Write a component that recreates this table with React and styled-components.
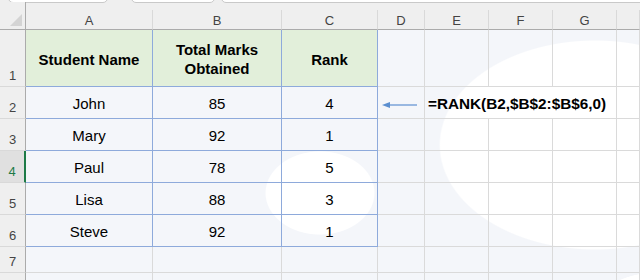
import React from 'react'
import styled, { createGlobalStyle } from 'styled-components'

const GlobalStyle = createGlobalStyle`
  html, body {
    margin: 0;
    padding: 0;
    background: #efefef;
    font-family: "Liberation Sans", Arial, sans-serif;
    overflow: hidden;
  }
`

const Page = styled.div`
  width: 640px;
  height: 280px;
  overflow: hidden;
  background: #efefef;
`

const TopStrip = styled.div`
  height: 10px;
  overflow: hidden;
  display: flex;
  padding-left: 8px;
`

const Tab = styled.div`
  width: ${({ $w }) => $w}px;
  margin-left: ${({ $ml }) => $ml || 0}px;
  height: 13px;
  margin-top: -10px;
  flex-shrink: 0;
  background: #ffffff;
  border: 1px solid #c9c9c9;
  border-radius: 5px;
  box-sizing: border-box;
`

const Sheet = styled.div`
  display: grid;
  grid-template-columns: 26px 127px 129px 96px 47px 64px 64px 64px 1fr;
  grid-template-rows: 20px 57px repeat(5, 32px) 26px 26px;
  background-color: #f4f6fa;
  background-image:
    radial-gradient(ellipse 156px 105px at 595px 135px, #ffffff 99%, transparent 100%),
    radial-gradient(ellipse 55px 42px at 320px 183px, #ffffff 98%, transparent 100%),
    radial-gradient(ellipse 60px 30px at 660px 292px, #ffffff 98%, transparent 100%);
  background-repeat: no-repeat;
`

const Corner = styled.div`
  background: #efefef;
  border-right: 1px solid #ababab;
  border-bottom: 1px solid #ababab;
  display: flex;
  align-items: flex-end;
  justify-content: flex-end;
  padding: 0 3px 3px 0;
  margin-top: -8px;
  height: 28px;
  box-sizing: border-box;
  align-self: end;
`

const ColHead = styled.div`
  background: #efefef;
  border-right: 1px solid #d9d9d9;
  border-bottom: 1px solid #ababab;
  display: flex;
  align-items: center;
  justify-content: center;
  font-size: 13px;
  color: #444444;
  padding-top: 1px;
`

const RowHead = styled.div`
  background: ${({ $active }) => ($active ? '#e0e0e0' : '#efefef')};
  border-right: ${({ $active }) => ($active ? '2px solid #1d7a47' : '1px solid #ababab')};
  border-bottom: 1px solid #d9d9d9;
  display: flex;
  align-items: flex-end;
  justify-content: center;
  padding-bottom: 3px;
  box-sizing: border-box;
  font-size: 13px;
  color: ${({ $active }) => ($active ? '#1d7a47' : '#444444')};
`

const Cell = styled.div`
  grid-column: span ${({ $span }) => $span || 1};
  box-sizing: border-box;
  border-right: 1px solid ${({ $blue }) => ($blue ? '#8eaadb' : '#dadada')};
  border-bottom: 1px solid ${({ $blue }) => ($blue ? '#8eaadb' : '#dadada')};
  background: ${({ $head }) => ($head ? '#e2efda' : 'transparent')};
  display: flex;
  align-items: center;
  justify-content: ${({ $left }) => ($left ? 'flex-start' : 'center')};
  padding: ${({ $left }) => ($left ? '2px 0 0 3px' : '2px 0 0 0')};
  text-align: center;
  font-size: ${({ $left }) => ($left ? '15.3px' : '15px')};
  line-height: 19px;
  font-weight: ${({ $bold }) => ($bold ? 700 : 400)};
  color: #000000;
  white-space: nowrap;
`

const ArrowCell = styled(Cell)`
  padding: 5px 0 0 4px;
  justify-content: flex-start;
`

const Arrow = () => (
  <svg width="36" height="8" viewBox="0 0 36 8">
    <line x1="4" y1="4" x2="35" y2="4" stroke="#5b8fd0" strokeWidth="1.2" />
    <polygon points="0,4 8,1 8,7" fill="#5b8fd0" />
  </svg>
)

const CornerMark = () => (
  <svg width="12" height="12" viewBox="0 0 12 12">
    <polygon points="12,0 12,12 0,12" fill="#d4d4d4" />
  </svg>
)

const letters = ['A', 'B', 'C', 'D', 'E', 'F', 'G', '']

const students = [
  ['John', 85, 4],
  ['Mary', 92, 1],
  ['Paul', 78, 5],
  ['Lisa', 88, 3],
  ['Steve', 92, 1],
]

const Blank = ({ n }) =>
  Array.from({ length: n }).map((_, i) => <Cell key={i} />)

const App = () => {
  return (
    <Page>
      <GlobalStyle />
      <TopStrip>
        <Tab $w={100} />
        <Tab $w={84} $ml={23} />
        <Tab $w={440} $ml={6} />
      </TopStrip>
      <Sheet>
        <Corner>
          <CornerMark />
        </Corner>
        {letters.map((l, i) => (
          <ColHead key={i}>{l}</ColHead>
        ))}

        <RowHead>1</RowHead>
        <Cell $head $blue $bold>Student Name</Cell>
        <Cell $head $blue $bold>Total Marks<br />Obtained</Cell>
        <Cell $head $blue $bold>Rank</Cell>
        <Blank n={5} />

        {students.map(([name, marks, rank], i) => (
          <React.Fragment key={name}>
            <RowHead $active={i === 2}>{i + 2}</RowHead>
            <Cell $blue>{name}</Cell>
            <Cell $blue>{marks}</Cell>
            <Cell $blue>{rank}</Cell>
            {i === 0 ? (
              <>
                <ArrowCell>
                  <Arrow />
                </ArrowCell>
                <Cell $span={3} $left $bold>=RANK(B2,$B$2:$B$6,0)</Cell>
                <Cell />
              </>
            ) : (
              <Blank n={5} />
            )}
          </React.Fragment>
        ))}

        <RowHead>7</RowHead>
        <Blank n={8} />
        <RowHead />
        <Blank n={8} />
      </Sheet>
    </Page>
  )
}

export default App
